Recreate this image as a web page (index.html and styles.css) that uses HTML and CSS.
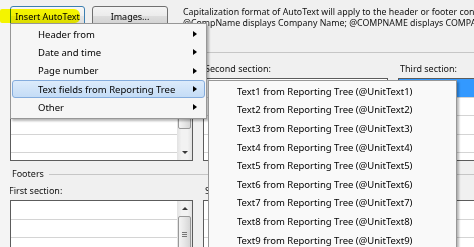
FILE: index.html
```html
<!DOCTYPE html>
<html lang="en">
<head>
  <meta charset="UTF-8" />
  <title>Header and Footer - Insert AutoText</title>
  <link rel="stylesheet" href="styles.css">
</head>
<body>

  <div class="screen">
    <div class="dialog">
      <div class="toolbar">
        <button class="btn btn-insert">Insert AutoText</button>
        <button class="btn btn-images">Images...</button>
        <p class="note">Capitalization format of AutoText will apply to the header or footer contents.<br>@CompName displays Company Name; @COMPNAME displays COMPANY NAME.</p>
      </div>

      <!-- Headers -->
      <section class="group">
        <div class="group-title">Headers</div>
        <div class="sections">
          <div class="section">
            <label>First section:</label>
            <div class="listbox">
              <div class="rows">
                <div class="row"></div><div class="row"></div><div class="row"></div><div class="row"></div><div class="row"></div>
              </div>
              <div class="vscroll">
                <div class="sb-btn sb-up"></div>
                <div class="thumb thumb-head"></div>
                <div class="track"></div>
                <div class="sb-btn sb-down"></div>
              </div>
            </div>
          </div>
          <div class="section">
            <label>Second section:</label>
            <div class="listbox">
              <div class="rows">
                <div class="row"></div><div class="row"></div><div class="row"></div><div class="row"></div><div class="row"></div>
              </div>
            </div>
          </div>
          <div class="section">
            <label>Third section:</label>
            <div class="listbox">
              <div class="rows">
                <div class="row selected"></div><div class="row"></div><div class="row"></div><div class="row"></div><div class="row"></div>
              </div>
            </div>
          </div>
        </div>
      </section>

      <!-- Footers -->
      <section class="group group-footers">
        <div class="group-title">Footers</div>
        <div class="sections">
          <div class="section">
            <label>First section:</label>
            <div class="listbox listbox-short">
              <div class="rows">
                <div class="row"></div><div class="row"></div><div class="row"></div><div class="row"></div>
              </div>
              <div class="vscroll">
                <div class="sb-btn sb-up"></div>
                <div class="thumb thumb-foot"><span class="grip"></span></div>
                <div class="track"></div>
              </div>
            </div>
          </div>
          <div class="section">
            <label>Second section:</label>
            <div class="listbox listbox-short">
              <div class="rows">
                <div class="row"></div><div class="row"></div><div class="row"></div><div class="row"></div>
              </div>
            </div>
          </div>
          <div class="section">
            <label>Third section:</label>
            <div class="listbox listbox-short">
              <div class="rows">
                <div class="row"></div><div class="row"></div><div class="row"></div><div class="row"></div>
              </div>
            </div>
          </div>
        </div>
      </section>
    </div>

    <!-- highlighter mark over the button -->
    <div class="marker"></div>

    <!-- Insert AutoText menu -->
    <ul class="menu main-menu">
      <li class="has-sub">Header from</li>
      <li class="has-sub">Date and time</li>
      <li class="has-sub">Page number</li>
      <li class="has-sub active">Text fields from Reporting Tree</li>
      <li class="has-sub">Other</li>
    </ul>

    <ul class="menu submenu">
      <li>Text1 from Reporting Tree (@UnitText1)</li>
      <li>Text2 from Reporting Tree (@UnitText2)</li>
      <li>Text3 from Reporting Tree (@UnitText3)</li>
      <li>Text4 from Reporting Tree (@UnitText4)</li>
      <li>Text5 from Reporting Tree (@UnitText5)</li>
      <li>Text6 from Reporting Tree (@UnitText6)</li>
      <li>Text7 from Reporting Tree (@UnitText7)</li>
      <li>Text8 from Reporting Tree (@UnitText8)</li>
      <li>Text9 from Reporting Tree (@UnitText9)</li>
      <li>Text10 from Reporting Tree (@UnitText10)</li>
    </ul>
  </div>

</body>
</html>
```

FILE: styles.css
```css
body {
  margin: 0;
  background: #f0f0f0;
  font-family: "Noto Sans", "Open Sans", sans-serif;
}
.screen {
  position: relative;
  width: 474px;
  height: 247px;
  overflow: hidden;
  background: #f4f4f4;
  color: #111;
}
.dialog {
  margin-left: 10px;
  height: 247px;
  overflow: hidden;
  background: #f0f0f0;
  font-size: 9px;
}

/* top row */
.toolbar {
  display: flex;
  align-items: flex-start;
  height: 46px;
}
.btn {
  flex: none;
  font: inherit;
  color: #000;
  white-space: nowrap;
  height: 21px;
  margin-top: 6px;
  padding: 0;
  border: 1px solid #707070;
  border-radius: 3px;
  background: linear-gradient(#f4f4f4 0, #ebebeb 50%, #dddddd 50%, #cfcfcf 100%);
}
.btn-insert {
  width: 75px;
  border-color: #3c7fb1;
  background: linear-gradient(#f7f7f7 0, #efefef 50%, #e4e4e4 50%, #dadada 100%);
}
.btn-images {
  width: 76px;
  margin-left: 7px;
}
.note {
  flex: none;
  margin: 0 0 0 15px;
  padding-top: 7px;
  font-size: 8.8px;
  line-height: 11px;
  white-space: nowrap;
}

/* group boxes */
.group-title {
  display: flex;
  align-items: center;
  height: 12px;
  line-height: 12px;
  padding-left: 2px;
}
.group-title::after {
  content: "";
  flex: 1;
  margin-left: 5px;
  border-top: 1px solid #c6c6c6;
}
.group-footers {
  margin-top: 7px;
}
.sections {
  display: grid;
  grid-template-columns: 183px 185px 180px;
  column-gap: 10px;
}
.section label {
  display: block;
  height: 13px;
  line-height: 13px;
  margin: 4px 0 3px;
  padding-left: 2px;
  white-space: nowrap;
}
.section:first-child label {
  padding-left: 0;
  margin-left: -1px;
}

/* list boxes */
.listbox {
  display: flex;
  box-sizing: border-box;
  height: 83px;
  border: 1px solid #5c5c5c;
  background: #fff;
  overflow: hidden;
}
.listbox-short {
  height: 60px;
}
.rows {
  flex: 1;
}
.row {
  height: 18.5px;
  box-sizing: border-box;
  border-bottom: 1px solid #d4d4d4;
}
.row.selected {
  background: #3399ff;
}

/* scroll bar */
.vscroll {
  width: 15px;
  display: flex;
  flex-direction: column;
  background: linear-gradient(90deg, #e2e2e2, #f2f2f2 30%, #f2f2f2 70%, #e2e2e2);
}
.sb-btn {
  height: 15px;
  flex: none;
  display: flex;
  align-items: center;
  justify-content: center;
}
.sb-btn::before {
  content: "";
  border-left: 3px solid transparent;
  border-right: 3px solid transparent;
}
.sb-up::before {
  border-bottom: 3px solid #3a3a3a;
}
.sb-down::before {
  border-top: 3px solid #3a3a3a;
}
.track {
  flex: 1;
}
.thumb {
  flex: none;
  margin: 0 1px;
  box-sizing: border-box;
  border: 1px solid #989898;
  border-radius: 2px;
  background: linear-gradient(90deg, #f4f4f4, #e6e6e6 50%, #d6d6d6);
  display: flex;
  align-items: center;
  justify-content: center;
}
.thumb-head {
  height: 35px;
}
.thumb-foot {
  height: 50px;
  align-items: flex-start;
  padding-top: 15px;
}
.grip {
  width: 5px;
  height: 5px;
  background: repeating-linear-gradient(#777 0 1px, transparent 1px 2px);
}

/* highlighter */
.marker {
  position: absolute;
  left: 0;
  top: 9px;
  width: 80px;
  height: 14px;
  background: #ffff00;
  mix-blend-mode: multiply;
  border-radius: 2px 6px 5px 2px;
  z-index: 3;
}

/* menus */
.menu {
  position: absolute;
  margin: 0;
  padding: 1px 1px 2px;
  list-style: none;
  box-sizing: border-box;
  background: #f6f6f6;
  border: 1px solid #979797;
  box-shadow: 2px 2px 2px rgba(0, 0, 0, 0.28);
  font-size: 9.5px;
  color: #000;
  z-index: 2;
}
.menu li {
  display: flex;
  align-items: center;
  justify-content: space-between;
  box-sizing: border-box;
  border: 1px solid transparent;
  border-radius: 3px;
  white-space: nowrap;
}
.main-menu {
  left: 10px;
  top: 23px;
  width: 197px;
}
.main-menu li {
  height: 18.3px;
  padding: 0 7px 0 25px;
}
.has-sub::after {
  content: "";
  border-left: 4px solid #000;
  border-top: 3.5px solid transparent;
  border-bottom: 3.5px solid transparent;
}
.main-menu li.active {
  background: linear-gradient(#dcebfb, #c4dcf6);
  border-color: #84acdd;
}
.submenu {
  left: 208px;
  top: 80px;
  width: 249px;
  background: #f9f9f9;
  z-index: 4;
}
.submenu li {
  height: 18.6px;
  padding-left: 26px;
}
```
